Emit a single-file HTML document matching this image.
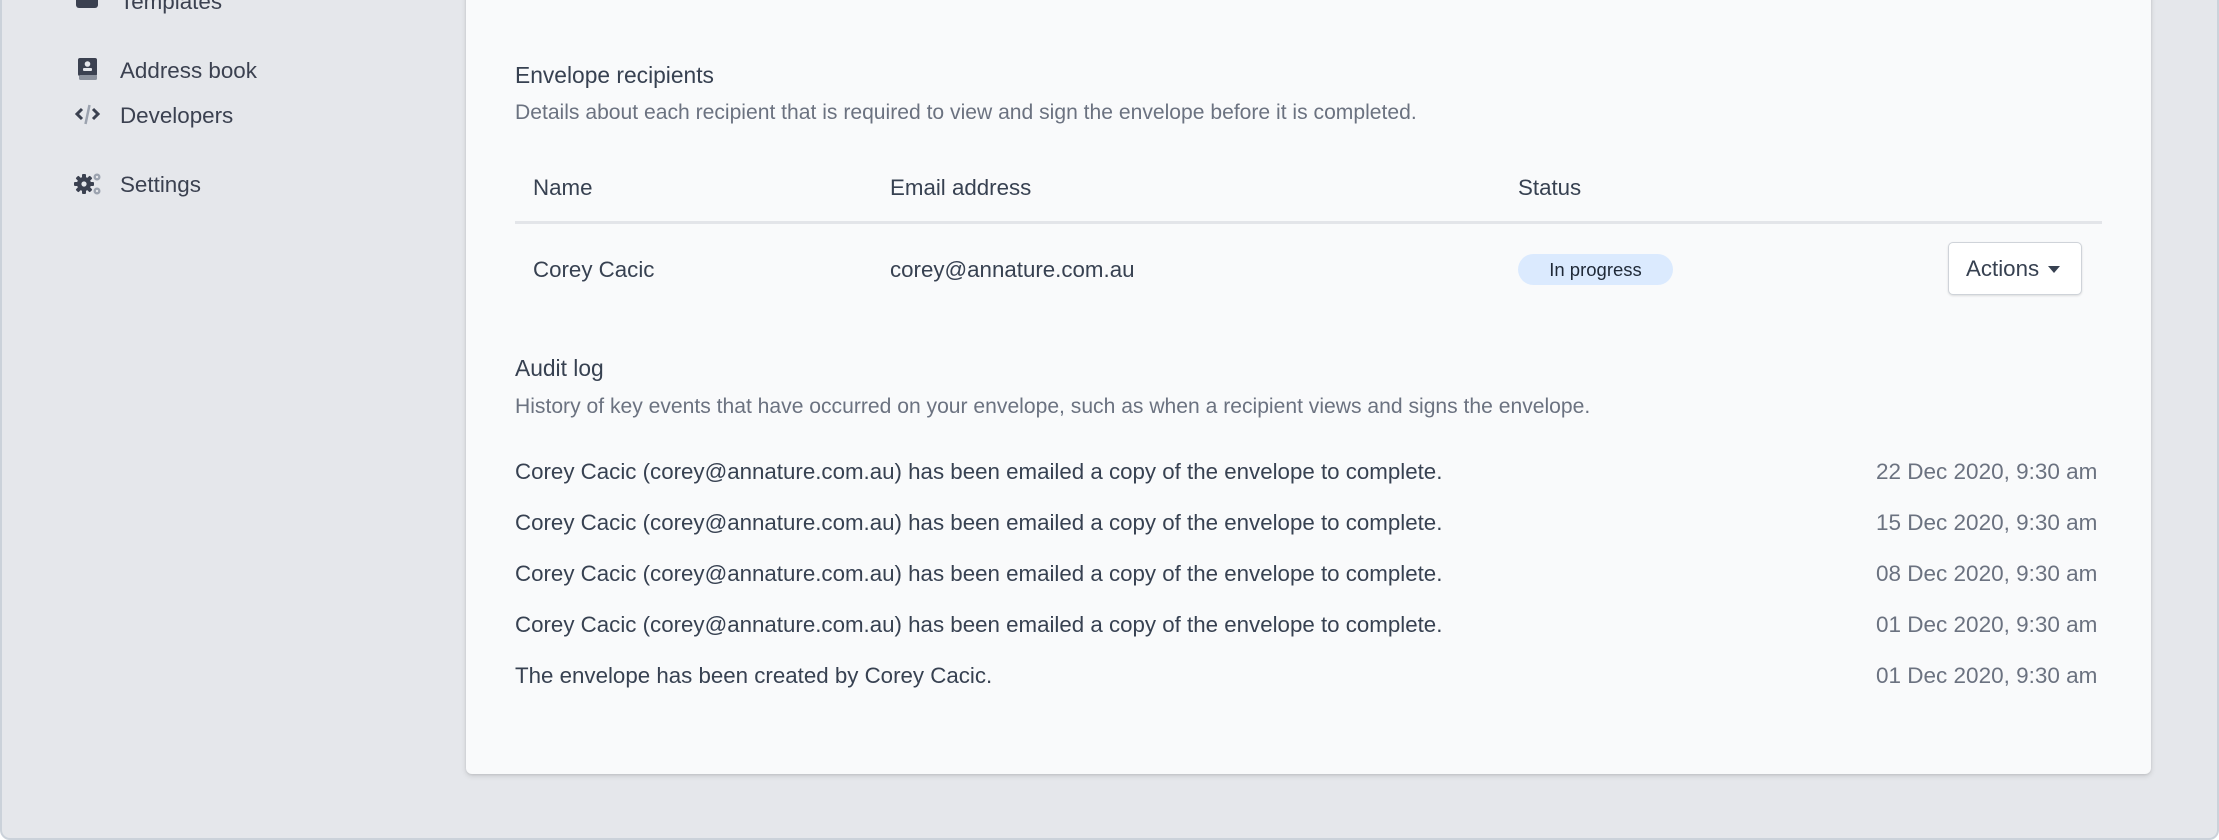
<!DOCTYPE html>
<html><head><meta charset="utf-8"><style>
*{margin:0;padding:0;box-sizing:border-box}
body{width:2219px;height:840px;overflow:hidden;background:#fff;font-family:"Liberation Sans",sans-serif;color:#374151}
.frame{position:absolute;left:0;top:-10px;width:2219px;height:850px;background:#e5e7eb;border:2px solid #cbd2da;border-radius:10px}
.t{position:absolute;white-space:nowrap;line-height:30px;height:30px}
.panel{position:absolute;left:466px;top:-10px;width:1685px;height:784px;background:#f9fafb;border-radius:0 0 6px 6px;box-shadow:0 2px 6px rgba(0,0,0,.12),0 1px 2px rgba(0,0,0,.08)}
.side{font-size:22.4px;color:#3b4150}
.h{font-size:22.8px;color:#374151}
.d{font-size:21.1px;color:#6b7280}
.c{font-size:22.3px;color:#374151}
.g{font-size:22.5px;color:#6b7280}
</style></head><body>
<div class="frame"></div>
<svg style="position:absolute;left:76px;top:-12px" width="22" height="22" viewBox="0 0 22 22"><rect x="0" y="0" width="22" height="20" rx="3" fill="#3b4150"/><path d="M2 4l9 6 9-6" stroke="#9ca3af" stroke-width="2" fill="none"/></svg>
<div class="t side" style="left:120px;top:-13px">Templates</div>
<svg style="position:absolute;left:78px;top:58px" width="20" height="23" viewBox="0 0 20 23"><rect x="0" y="0" width="19" height="18" rx="2" fill="#3b4150"/><rect x="1" y="17" width="18" height="5" rx="1.5" fill="#8b919c"/><circle cx="9.5" cy="6" r="2.8" fill="#e5e7eb"/><rect x="5" y="10" width="9" height="3" rx="1" fill="#e5e7eb"/></svg>
<div class="t side" style="left:120px;top:56px">Address book</div>
<svg style="position:absolute;left:74px;top:103px" width="27" height="22" viewBox="0 0 27 22"><path d="M8 6l-5 5 5 5" stroke="#3b4150" stroke-width="3" fill="none"/><path d="M19 6l5 5-5 5" stroke="#3b4150" stroke-width="3" fill="none"/><path d="M15.5 2l-4 19" stroke="#9ca3af" stroke-width="2.5"/></svg>
<div class="t side" style="left:120px;top:101px">Developers</div>
<svg style="position:absolute;left:74px;top:172px" width="28" height="24" viewBox="0 0 28 24"><g fill="#3b4150"><circle cx="10" cy="12" r="7"/><rect x="8" y="2" width="4" height="20" rx="1"/><rect x="0" y="10" width="20" height="4" rx="1"/><rect x="8" y="2" width="4" height="20" rx="1" transform="rotate(45 10 12)"/><rect x="8" y="2" width="4" height="20" rx="1" transform="rotate(-45 10 12)"/></g><circle cx="10" cy="12" r="2.6" fill="#e5e7eb"/><circle cx="23" cy="5" r="3.5" fill="#9ca3af"/><circle cx="23" cy="19" r="3.5" fill="#9ca3af"/><circle cx="23" cy="5" r="1.2" fill="#e5e7eb"/><circle cx="23" cy="19" r="1.2" fill="#e5e7eb"/></svg>
<div class="t side" style="left:120px;top:170px">Settings</div>

<div class="panel"></div>
<div class="t h" style="left:515px;top:60px">Envelope recipients</div>
<div class="t d" style="left:515px;top:98px">Details about each recipient that is required to view and sign the envelope before it is completed.</div>
<div class="t c" style="left:533px;top:173px">Name</div>
<div class="t c" style="left:890px;top:173px">Email address</div>
<div class="t c" style="left:1518px;top:173px">Status</div>
<div style="position:absolute;left:515px;top:221px;width:1587px;height:3px;background:#e3e5e9"></div>
<div class="t c" style="left:533px;top:255px">Corey Cacic</div>
<div class="t c" style="left:890px;top:255px">corey@annature.com.au</div>
<div style="position:absolute;left:1518px;top:254px;width:155px;height:31px;border-radius:16px;background:#dbeafe;color:#1f2937;font-size:18.5px;line-height:31px;text-align:center">In progress</div>
<div style="position:absolute;left:1948px;top:242px;width:134px;height:53px;border:1px solid #cfd3d9;border-radius:5px;background:#fff;box-shadow:0 1px 2px rgba(0,0,0,.12);font-size:22.3px;line-height:51px;color:#374151;padding-left:17px">Actions<svg style="position:absolute;left:99px;top:23px" width="12" height="7" viewBox="0 0 12 7"><path d="M0 0h12L6 7z" fill="#374151"/></svg></div>
<div class="t h" style="left:515px;top:353px">Audit log</div>
<div class="t d" style="left:515px;top:392px">History of key events that have occurred on your envelope, such as when a recipient views and signs the envelope.</div>
<div class="t c" style="left:515px;top:457px">Corey Cacic (corey@annature.com.au) has been emailed a copy of the envelope to complete.</div>
<div class="t g" style="left:1876px;top:457px">22 Dec 2020, 9:30 am</div>
<div class="t c" style="left:515px;top:508px">Corey Cacic (corey@annature.com.au) has been emailed a copy of the envelope to complete.</div>
<div class="t g" style="left:1876px;top:508px">15 Dec 2020, 9:30 am</div>
<div class="t c" style="left:515px;top:559px">Corey Cacic (corey@annature.com.au) has been emailed a copy of the envelope to complete.</div>
<div class="t g" style="left:1876px;top:559px">08 Dec 2020, 9:30 am</div>
<div class="t c" style="left:515px;top:610px">Corey Cacic (corey@annature.com.au) has been emailed a copy of the envelope to complete.</div>
<div class="t g" style="left:1876px;top:610px">01 Dec 2020, 9:30 am</div>
<div class="t c" style="left:515px;top:661px">The envelope has been created by Corey Cacic.</div>
<div class="t g" style="left:1876px;top:661px">01 Dec 2020, 9:30 am</div>
</body></html>
